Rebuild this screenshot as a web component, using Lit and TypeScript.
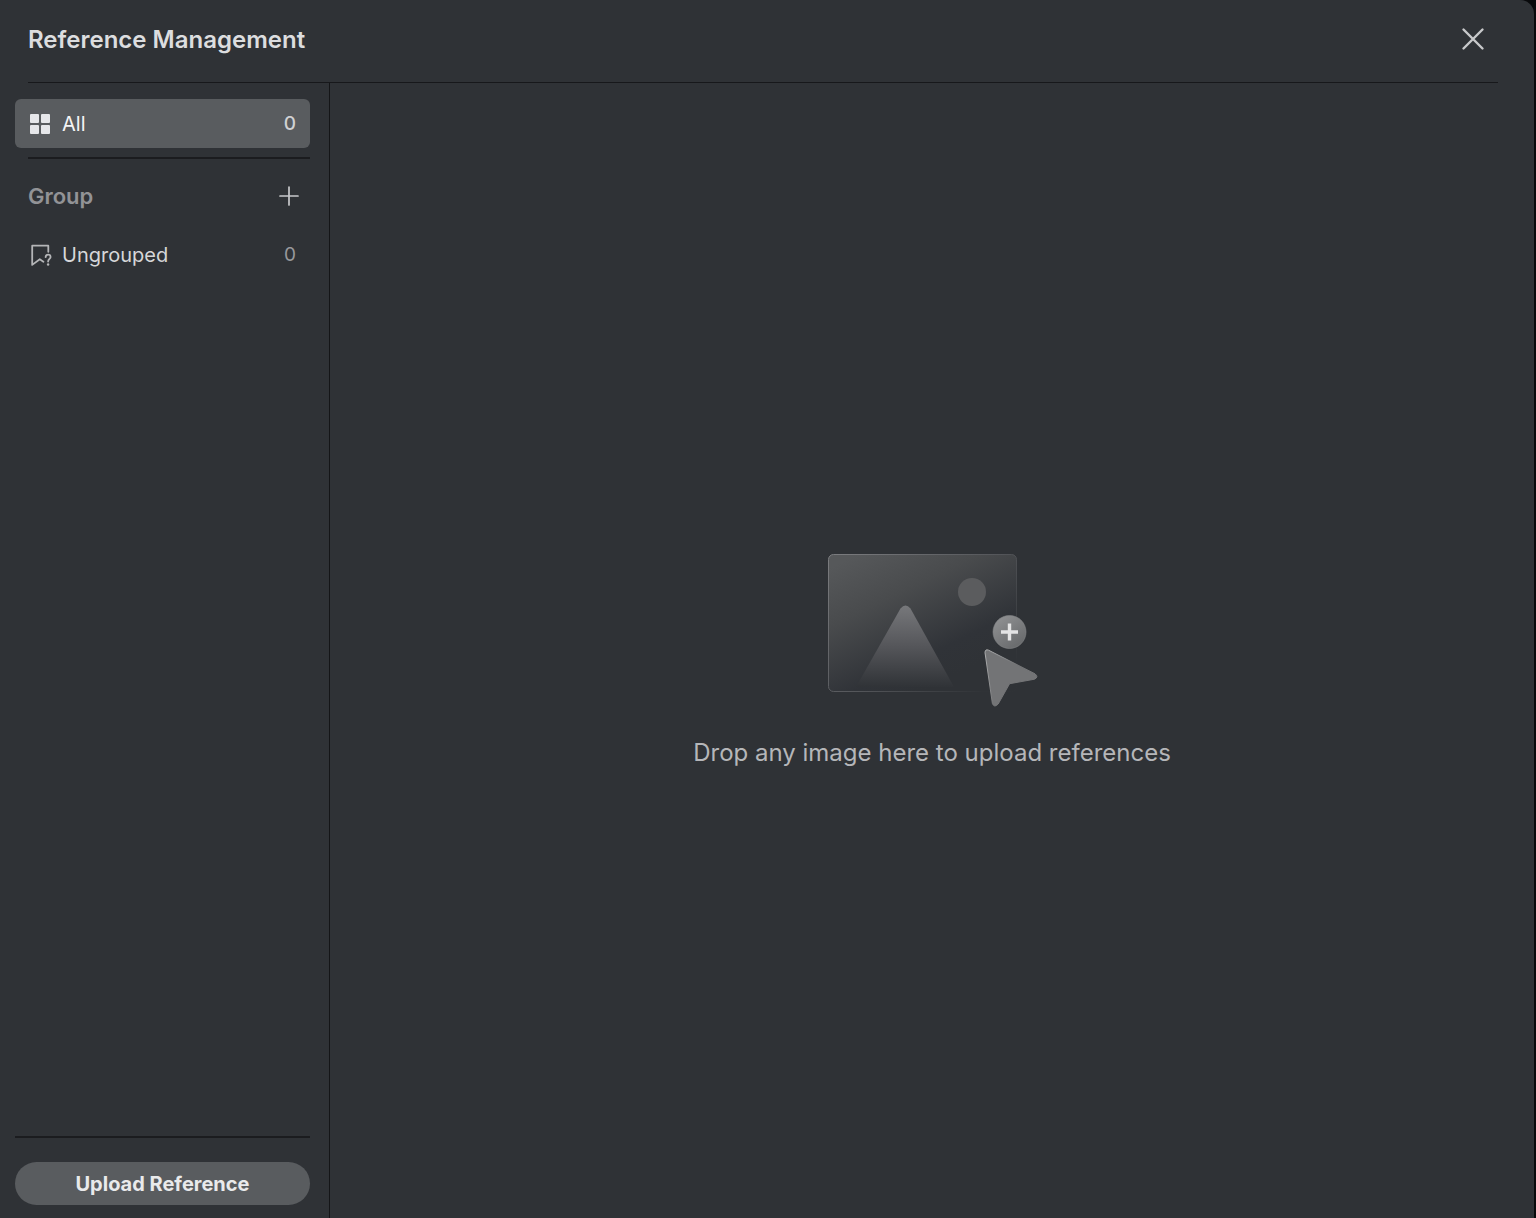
import { LitElement, html, css, svg } from "lit";
import { customElement, property, state } from "lit/decorators.js";
import { classMap } from "lit/directives/class-map.js";

const gridIcon = svg`
  <rect x="2" y="2" width="9" height="9" rx="1" />
  <rect x="13" y="2" width="9" height="9" rx="1" />
  <rect x="2" y="13" width="9" height="9" rx="1" />
  <rect x="13" y="13" width="9" height="9" rx="1" />
`;

const bookmarkIcon = svg`
  <g fill="none" stroke="currentColor" stroke-width="1.8" stroke-linecap="round" stroke-linejoin="round">
    <path d="M20.300 8.800V2.700H4.200v19.200l7.600-5.700 3.600 2.500" />
    <path d="M17.600 14.100c.1-1.600 1.100-2.400 2.500-2.400 1.500 0 2.500.9 2.500 2.200 0 2-2.500 2-2.500 4.600" />
  </g>
  <circle cx="20.100" cy="21.500" r="1.200" />
`;

@customElement("drop-illustration")
export class DropIllustration extends LitElement {
  static styles = css`
    :host {
      display: block;
    }
    .art {
      display: block;
    }
  `;

  render() {
    return html`
      <svg class="art" width="212" height="156" viewBox="-1 0 212 156" aria-hidden="true">
        <defs>
          <linearGradient id="card" gradientUnits="userSpaceOnUse" x1="34" y1="0" x2="100" y2="136">
            <stop offset="0" stop-color="#56585a" />
            <stop offset="0.35" stop-color="#494b4d" />
            <stop offset="0.8" stop-color="#303338" />
            <stop offset="1" stop-color="#2f3236" />
          </linearGradient>
          <linearGradient id="edge" gradientUnits="userSpaceOnUse" x1="10" y1="0" x2="150" y2="145">
            <stop offset="0" stop-color="#7a7b7e" />
            <stop offset="0.55" stop-color="#55575b" />
            <stop offset="1" stop-color="#303337" />
          </linearGradient>
          <linearGradient id="peak" x1="0" y1="0" x2="0" y2="1">
            <stop offset="0" stop-color="#77787b" />
            <stop offset="0.5" stop-color="#55565a" />
            <stop offset="1" stop-color="#303337" />
          </linearGradient>
          <linearGradient id="badge" x1="0.1" y1="0" x2="0.8" y2="1">
            <stop offset="0" stop-color="#929395" />
            <stop offset="1" stop-color="#66686a" />
          </linearGradient>
          <linearGradient id="rim" x1="0" y1="0" x2="1" y2="0.6">
            <stop offset="0" stop-color="#b0b1b2" />
            <stop offset="0.6" stop-color="#747577" />
          </linearGradient>
        </defs>
        <rect x="1.5" y="1.5" width="188" height="137" rx="5" fill="url(#card)" stroke="url(#edge)" />
        <path d="M73.500 55.500Q78.500 49.500 83.500 55.500L127 134H29Z" fill="url(#peak)" />
        <circle cx="145" cy="39" r="14" fill="#5b5c5e" />
        <circle cx="182.500" cy="79" r="16.500" fill="url(#badge)" stroke="#858688" stroke-width="0.6" />
        <path d="M182.500 70.500v17M174 79h17" stroke="#e4e4e5" stroke-width="3.400" />
        <path
          d="M161.600 97.200L208 120.800Q212 124 207.500 126.200L182.600 130.700L171.200 151Q167.300 155.200 165.400 150.500L158 99.600Q158.200 95.800 161.600 97.200Z"
          fill="#737476"
          stroke="url(#rim)"
          stroke-width="1"
          stroke-linejoin="round"
        />
      </svg>
    `;
  }
}

@customElement("nav-item")
export class NavItem extends LitElement {
  @property() label = "";
  @property({ type: Number }) count = 0;
  @property({ attribute: false }) icon: unknown = null;
  @property({ type: Boolean }) selected = false;

  static styles = css`
    :host {
      display: block;
    }
    .item {
      display: flex;
      align-items: center;
      gap: 10px;
      box-sizing: border-box;
      width: 100%;
      height: 49px;
      padding: 0 14px 0 13px;
      border: 0;
      border-radius: 6px;
      background: transparent;
      color: #d6d7d9;
      font: 400 20px/24px Inter, sans-serif;
      text-align: left;
      cursor: pointer;
    }
    .selected {
      background: #595c5f;
      color: #f4f4f5;
    }
    .icon {
      flex: none;
      width: 24px;
      height: 24px;
      fill: currentColor;
      color: #b4b5b7;
    }
    .selected .icon {
      color: #e6e7ea;
    }
    .label {
      flex: 1;
    }
    .count {
      color: #98999c;
      font-size: 19px;
    }
    .selected .count {
      color: #d0d1d3;
      font-weight: 500;
    }
  `;

  render() {
    return html`
      <button class=${classMap({ item: true, selected: this.selected })} type="button">
        <svg class="icon" viewBox="0 0 24 24" aria-hidden="true">${this.icon}</svg>
        <span class="label">${this.label}</span>
        <span class="count">${this.count}</span>
      </button>
    `;
  }
}

@customElement("app-root")
export class AppRoot extends LitElement {
  @state() private active = "All";

  static styles = css`
    :host {
      display: block;
      background: #08090b;
      font-family: Inter, sans-serif;
    }
    .dialog {
      display: flex;
      flex-direction: column;
      box-sizing: border-box;
      min-height: 100vh;
      margin-right: 2px;
      border-top-right-radius: 14px;
      background: #2f3236;
    }
    .header {
      display: flex;
      align-items: center;
      justify-content: space-between;
      height: 82px;
      margin: 0 36px 0 28px;
      border-bottom: 1px solid #17181b;
      box-sizing: content-box;
    }
    .title {
      margin: 0 0 2px;
      color: #dcdddf;
      font-size: 24px;
      line-height: 30px;
      font-weight: 600;
    }
    .icon-button {
      display: flex;
      padding: 4px;
      border: 0;
      background: transparent;
      color: #c8c9cb;
      cursor: pointer;
    }
    .close {
      margin: 0 8px 5px 0;
    }
    .stroke {
      fill: none;
      stroke: currentColor;
      stroke-linecap: round;
    }
    .body {
      flex: 1;
      display: grid;
      grid-template-columns: 330px 1fr;
    }
    .sidebar {
      display: flex;
      flex-direction: column;
      padding: 16px 19px 13px 15px;
      border-right: 1px solid #141517;
      box-sizing: border-box;
    }
    .rule {
      height: 2px;
      margin: 9px 0 0 13px;
      border: 0;
      background: #1b1c1f;
    }
    .group {
      display: flex;
      align-items: center;
      justify-content: space-between;
      height: 71px;
      padding: 2px 6px 0 13px;
      box-sizing: border-box;
    }
    .group-title {
      margin: 0;
      color: #929396;
      font-size: 22px;
      line-height: 28px;
      font-weight: 600;
    }
    .footer {
      margin-top: auto;
      padding-top: 24px;
      border-top: 2px solid #1b1c1f;
    }
    .upload {
      width: 100%;
      height: 43px;
      border: 0;
      border-radius: 22px;
      background: #595c5f;
      color: #e9eaeb;
      font: 700 20px/24px Inter, sans-serif;
      cursor: pointer;
    }
    .drop {
      display: flex;
      flex-direction: column;
      align-items: center;
      justify-content: center;
      gap: 29px;
      padding-top: 19px;
    }
    .hint {
      margin: 0;
      color: #b5b6b9;
      font-size: 24px;
      line-height: 30px;
    }
  `;

  render() {
    return html`
      <section class="dialog" aria-labelledby="title">
        <header class="header">
          <h1 class="title" id="title">Reference Management</h1>
          <button class="icon-button close" type="button" aria-label="Close">
            <svg class="stroke" width="26" height="26" viewBox="0 0 26 26" stroke-width="2.400">
              <path d="M3.500 3.500l19 19M22.500 3.500l-19 19" />
            </svg>
          </button>
        </header>
        <div class="body">
          <nav class="sidebar">
            <nav-item
              label="All"
              .count=${0}
              .icon=${gridIcon}
              .selected=${this.active === "All"}
              @click=${() => (this.active = "All")}
            ></nav-item>
            <hr class="rule" />
            <div class="group">
              <h2 class="group-title">Group</h2>
              <button class="icon-button" type="button" aria-label="Add group">
                <svg class="stroke" width="22" height="22" viewBox="0 0 22 22" stroke-width="1.700">
                  <path d="M11 2v18M2 11h18" />
                </svg>
              </button>
            </div>
            <nav-item
              label="Ungrouped"
              .count=${0}
              .icon=${bookmarkIcon}
              .selected=${this.active === "Ungrouped"}
              @click=${() => (this.active = "Ungrouped")}
            ></nav-item>
            <div class="footer">
              <button class="upload" type="button">Upload Reference</button>
            </div>
          </nav>
          <main class="drop">
            <drop-illustration></drop-illustration>
            <p class="hint">Drop any image here to upload references</p>
          </main>
        </div>
      </section>
    `;
  }
}
